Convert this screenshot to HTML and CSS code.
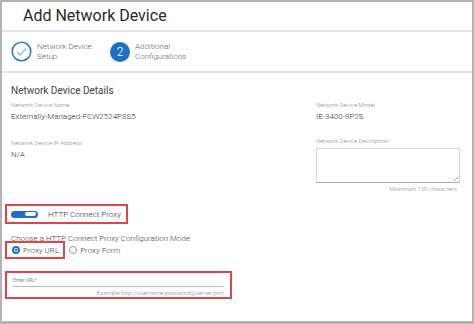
FILE: index.html
```html
<!DOCTYPE html>
<html lang="en">
<head>
  <meta charset="UTF-8" />
  <title>Add Network Device</title>
  <link rel="stylesheet" href="styles.css">
</head>
<body>
  <div class="frame">

    <!-- title -->
    <div class="header">Add Network Device</div>

    <!-- wizard steps -->
    <div class="steps">
      <div class="step step-done">
        <svg class="step-icon" width="21" height="21" viewBox="0 0 21 21">
          <circle cx="10.5" cy="10.5" r="9.3" fill="none" stroke="#2b7bd0" stroke-width="1.6" />
          <path d="M6 10.8 L9.2 14 L15.2 7.2" fill="none" stroke="#8fb6de" stroke-width="1.2" />
        </svg>
        <div class="step-text">Network Device<br>Setup</div>
      </div>
      <div class="step">
        <div class="step-num">2</div>
        <div class="step-text">Additional<br>Configurations</div>
      </div>
    </div>

    <!-- details -->
    <div class="details">
      <div class="section-title">Network Device Details</div>

      <div class="grid">
        <div class="field">
          <div class="label">Network Device Name</div>
          <div class="value">Externally-Managed-FCW2524P8S5</div>
        </div>
        <div class="field">
          <div class="label">Network Device Model</div>
          <div class="value">IE-3400-8P2S</div>
        </div>
        <div class="field field-ip">
          <div class="label">Network Device IP Address</div>
          <div class="value">N/A</div>
        </div>
        <div class="field field-desc">
          <div class="label">Network Device Description</div>
          <div class="textarea"><span class="grip"></span></div>
          <div class="hint">Maximum 150 characters</div>
        </div>
      </div>

      <div class="mark mark-toggle">
        <span class="toggle"><span class="knob"></span></span>
        <span class="toggle-label">HTTP Connect Proxy</span>
      </div>

      <div class="mode-title">Choose a HTTP Connect Proxy Configuration Mode</div>
      <div class="radios">
        <div class="mark mark-radio">
          <span class="radio checked"></span>
          <span>Proxy URL</span>
        </div>
        <div class="radio-item">
          <span class="radio"></span>
          <span>Proxy Form</span>
        </div>
      </div>

      <div class="mark mark-url">
        <div class="url-label">Enter URL*</div>
        <div class="url-line"></div>
        <div class="url-hint">Example http://username:password@server:port</div>
      </div>
    </div>

  </div>
</body>
</html>
```

FILE: styles.css
```css
:root {
  --blue: #1b6fc4;
  --red: #e0434c;
  --line: #e4e4e4;
  --text: #3a3a3a;
  --muted: #8a8a8a;
}

body {
  margin: 0;
  font-family: Roboto, "Liberation Sans", Arial, sans-serif;
  color: var(--text);
  background: white;
}

.frame {
  box-sizing: border-box;
  width: 474px;
  height: 324px;
  border: 2px solid #b3b3b3;
  border-bottom-width: 3px;
  overflow: hidden;
}

.header {
  height: 28px;
  padding-left: 21px;
  font-size: 16px;
  line-height: 27px;
  color: #2a2a2a;
  border-bottom: 2px solid var(--line);
}

.steps {
  display: flex;
  align-items: center;
  height: 39px;
  padding-left: 9px;
  border-bottom: 2px solid var(--line);
}
.step {
  display: flex;
  align-items: center;
  gap: 5px;
}
.step-done {
  width: 99px;
}
.step-num {
  width: 20px;
  height: 20px;
  border-radius: 50%;
  background: var(--blue);
  color: white;
  font-size: 12px;
  font-weight: 300;
  line-height: 20px;
  text-align: center;
}
.step-text {
  font-size: 8px;
  line-height: 10px;
  font-weight: 300;
  color: #666;
}

.details {
  padding: 12px 9px 0;
}
.section-title {
  font-size: 10px;
  line-height: 12px;
  color: #444;
}

.grid {
  display: grid;
  grid-template-columns: 305px 144px;
  margin-top: 4px;
}
.label {
  font-size: 6px;
  line-height: 8px;
  font-weight: 300;
  color: var(--muted);
}
.value {
  margin-top: 3px;
  font-size: 8px;
  line-height: 10px;
  font-weight: 300;
  color: #333;
}
.field-ip {
  margin-top: 17px;
}
.field-desc {
  margin-top: 15px;
}
.textarea {
  position: relative;
  box-sizing: border-box;
  height: 35px;
  margin-top: 3px;
  border: 1px solid #d6d6d6;
  border-bottom-color: #aaa;
}
.grip {
  position: absolute;
  right: 1px;
  bottom: 1px;
  width: 4px;
  height: 4px;
  background: linear-gradient(135deg, transparent 45%, #999 45%, #999 55%, transparent 55%);
}
.hint {
  margin-top: 2px;
  margin-right: 3px;
  text-align: right;
  font-size: 6px;
  line-height: 8px;
  font-weight: 300;
  color: var(--muted);
}

.mark {
  box-sizing: border-box;
  border: 2px solid var(--red);
}
.mark-toggle {
  display: flex;
  align-items: center;
  gap: 10px;
  width: 123px;
  height: 20px;
  margin: 11px 0 0 -6px;
  padding-left: 4px;
}
.toggle {
  position: relative;
  width: 27px;
  height: 7px;
  border-radius: 4px;
  background: var(--blue);
}
.knob {
  position: absolute;
  right: 2px;
  top: 1.5px;
  width: 11px;
  height: 4px;
  border-radius: 2px;
  background: white;
}
.toggle-label {
  font-size: 8px;
  font-weight: 300;
  color: #333;
}

.mode-title {
  margin-top: 10px;
  font-size: 8px;
  line-height: 10px;
  font-weight: 300;
  color: #444;
}
.radios {
  display: flex;
  align-items: center;
  gap: 4px;
  margin: -3px 0 0 -6px;
}
.mark-radio,
.radio-item {
  display: flex;
  align-items: center;
  gap: 3px;
  font-size: 8px;
  font-weight: 300;
  color: #444;
}
.mark-radio {
  height: 18px;
  padding: 0 4px 0 5px;
}
.radio {
  box-sizing: border-box;
  width: 8px;
  height: 8px;
  border: 1px solid #999;
  border-radius: 50%;
}
.radio.checked {
  border: 2px solid var(--blue);
  background: radial-gradient(circle, var(--blue) 45%, white 50%);
}

.mark-url {
  width: 227px;
  height: 28px;
  margin: 12px 0 0 -6px;
  padding: 4px 6px 0 6px;
}
.url-label {
  font-size: 5px;
  line-height: 6px;
  color: var(--muted);
}
.url-line {
  margin-top: 3px;
  border-top: 1px solid #bbb;
}
.url-hint {
  margin-top: 2px;
  text-align: right;
  font-size: 6px;
  line-height: 8px;
  font-weight: 300;
  color: #888;
}
```
